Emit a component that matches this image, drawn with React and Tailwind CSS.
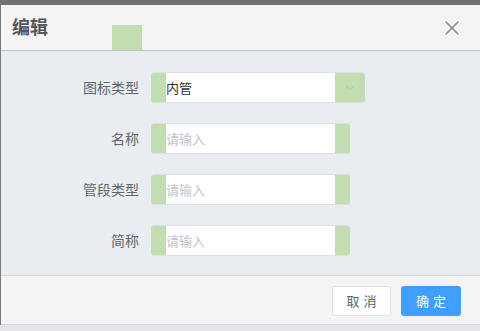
import { X, ChevronDown } from 'lucide-react';

const Field = ({ label, value, select }) => (
  <div className="flex items-center h-[31px]">
    <div className="w-[138px] text-right text-[14px] text-[#63666b]">{label}</div>
    <div
      className={`ml-[12px] flex h-[31px] items-stretch bg-white border-y border-[#dcdfe6] rounded-[3px] overflow-hidden ${
        select ? 'w-[214px]' : 'w-[199px]'
      }`}
    >
      <div className="w-[15px] bg-[#c3ddb3]" />
      <div
        className={`flex-1 flex items-center text-[13px] ${
          value ? 'text-[#333]' : 'text-[#c0c4cc]'
        }`}
      >
        {value || '请输入'}
      </div>
      {select ? (
        <div className="w-[30px] bg-[#c3ddb3] flex items-center justify-center">
          <ChevronDown className="h-[14px] w-[14px] text-[#a6c798]" strokeWidth={1.5} />
        </div>
      ) : (
        <div className="w-[15px] bg-[#c3ddb3]" />
      )}
    </div>
  </div>
);

const App = () => {
  return (
    <div
      className="w-[480px] h-[331px] bg-[#e4e5e8] overflow-hidden"
      style={{ fontFamily: '"Noto Sans CJK SC", "Noto Sans", sans-serif' }}
    >
      <div className="h-[5px] bg-[#737373]" />
      <div className="border-l border-[#7a7a7a]">
        {/* Header */}
        <div className="relative h-[46px] bg-[#f4f4f4] border-b border-[#c2c2c2] flex items-center px-[11px]">
          <h2 className="text-[18px] font-bold text-[#555] leading-none -mt-[4px]">编辑</h2>
          <div className="absolute left-[111px] bottom-0 w-[30px] h-[25px] bg-[#c3ddb3]" />
          <button className="ml-auto mr-[5px] text-[#8a8a8a]">
            <X className="h-[24px] w-[24px]" strokeWidth={1.6} />
          </button>
        </div>

        {/* Body */}
        <div className="bg-[#e9ecf0] pt-[21px] pb-[19px] flex flex-col gap-[20px]">
          <Field label="图标类型" value="内管" select />
          <Field label="名称" />
          <Field label="管段类型" />
          <Field label="简称" />
        </div>

        {/* Footer */}
        <div className="h-[50px] bg-[#f4f4f4] border-t border-b border-[#d4d6da] flex items-start justify-end pt-[10px] pr-[19px] gap-[10px]">
          <button className="w-[59px] h-[30px] bg-white border border-[#dcdfe6] rounded-[3px] text-[13px] text-[#606266] tracking-[4px] pl-[4px]">
            取消
          </button>
          <button className="w-[60px] h-[30px] bg-[#409eff] rounded-[3px] text-[13px] text-white tracking-[4px] pl-[4px]">
            确定
          </button>
        </div>
      </div>
    </div>
  );
};

export default App;
